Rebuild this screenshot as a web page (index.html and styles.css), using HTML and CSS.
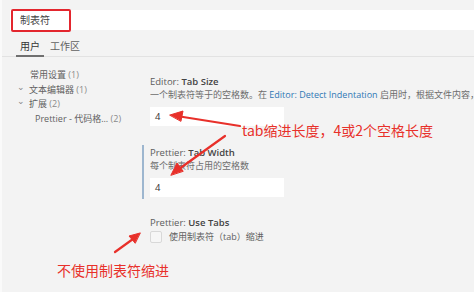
FILE: index.html
```html
<!DOCTYPE html>
<html lang="zh-CN">
<head>
    <meta charset="UTF-8">
    <title>设置 - 制表符</title>
    <link rel="stylesheet" href="styles.css">
</head>
<body>
    <div class="page">
        <div class="search-row">
            <div class="search-box">制表符</div>
            <div class="search-mark"></div>
        </div>

        <div class="tabs">
            <a href="#" class="tab active">用户</a>
            <a href="#" class="tab">工作区</a>
        </div>

        <div class="main">
            <!-- left tree -->
            <div class="tree">
                <div class="tree-item lvl1">常用设置 <span class="count">(1)</span></div>
                <div class="tree-item"><span class="chev">&#8964;</span>文本编辑器 <span class="count">(1)</span></div>
                <div class="tree-item"><span class="chev">&#8964;</span>扩展 <span class="count">(2)</span></div>
                <div class="tree-item lvl2">Prettier - 代码格... <span class="count">(2)</span></div>
            </div>

            <!-- settings list -->
            <div class="settings">
                <div class="setting">
                    <div class="setting-title">Editor: <b>Tab Size</b></div>
                    <div class="setting-desc">一个制表符等于的空格数。在 <a href="#">Editor: Detect Indentation</a> 启用时，根据文件内容，该设</div>
                    <div class="num-input">4</div>
                </div>

                <div class="setting focused">
                    <div class="setting-title">Prettier: <b>Tab Width</b></div>
                    <div class="setting-desc">每个制表符占用的空格数</div>
                    <div class="num-input">4</div>
                </div>

                <div class="setting">
                    <div class="setting-title">Prettier: <b>Use Tabs</b></div>
                    <label class="check-row"><span class="checkbox"></span>使用制表符（tab）缩进</label>
                </div>
            </div>
        </div>

        <!-- annotations -->
        <div class="note note-tab">tab缩进长度，4或2个空格长度</div>
        <div class="note note-use">不使用制表符缩进</div>
        <svg class="arrows" width="474" height="296" viewBox="0 0 474 296">
            <g fill="#e8302a" stroke="#e8302a" stroke-linecap="round">
                <line x1="240" y1="126" x2="180" y2="116.5" stroke-width="2.2"/>
                <polygon points="170,115 183,111 181,121" stroke-width="1"/>
                <line x1="225" y1="136" x2="179" y2="169" stroke-width="2.2"/>
                <polygon points="171,175 177,163 183,171" stroke-width="1"/>
                <line x1="115" y1="252" x2="133" y2="239" stroke-width="2.2"/>
                <polygon points="140,233 129,236 135,243" stroke-width="1"/>
            </g>
        </svg>
    </div>
</body>
</html>
```

FILE: styles.css
```css
* { box-sizing: border-box; }
body { margin: 0; background-color: #ffffff; font-family: "Open Sans", "Noto Sans CJK SC", sans-serif; color: #616161; }

.page { position: relative; width: 474px; height: 292px; overflow: hidden; background-color: #f3f3f3; border-left: 2px solid #fafafa; }

/* Search */
.search-row { position: relative; padding-top: 10px; padding-left: 8px; }
.search-box { height: 20px; background-color: #ffffff; font-size: 10px; line-height: 20px; padding-left: 10px; color: #444; }
.search-mark { position: absolute; left: 9px; top: 9px; width: 60px; height: 23px; border: 2px solid #e3262e; border-radius: 2px; }

/* Tabs */
.tabs { display: flex; margin-top: 7px; padding-left: 14px; border-bottom: 1px solid #e2e2e2; height: 20px; }
.tab { font-size: 10px; color: #616161; text-decoration: none; padding: 0 4px; margin-right: 2px; line-height: 18px; height: 20px; }
.tab.active { color: #333; border-bottom: 2px solid #6f6f6f; width: 28px; }

/* Layout */
.main { display: grid; grid-template-columns: 140px 1fr; }

.tree { padding-top: 11px; font-size: 9px; }
.tree-item { height: 14.5px; line-height: 14.5px; white-space: nowrap; color: #616161; }
.tree-item .count { color: #8a8a8a; }
.tree-item.lvl1 { padding-left: 28px; }
.tree-item.lvl2 { padding-left: 33px; }
.tree-item .chev { display: inline-block; width: 12px; margin-left: 15px; font-size: 9px; color: #888; position: relative; top: -3px; }

.settings { padding-top: 19px; }
.setting { padding: 0 0 0 6px; margin-bottom: 19px; border-left: 2px solid transparent; }
.setting.focused { border-left-color: #9db6cf; padding-top: 2px; padding-bottom: 2px; margin-bottom: 18px; }
.setting-title { font-size: 9.5px; line-height: 12px; color: #5c5c5c; }
.setting-title b { color: #444; font-weight: 600; }
.setting-desc { font-size: 9px; line-height: 13px; color: #6c6c6c; white-space: nowrap; overflow: hidden; }
.setting-desc a { color: #2f78b5; text-decoration: none; }

.num-input { width: 134px; height: 19px; background-color: #ffffff; margin-top: 6px; font-size: 9.5px; line-height: 19px; padding-left: 5px; color: #333; }

.check-row { display: flex; align-items: center; font-size: 9px; color: #616161; margin-top: 1px; }
.checkbox { display: inline-block; width: 12px; height: 12px; border: 1px solid #d8d8d8; background-color: #f6f6f6; border-radius: 2px; margin-right: 7px; }

/* Annotations */
.note { position: absolute; color: #e8302a; font-family: "Noto Sans CJK SC", sans-serif; font-size: 14px; line-height: 18px; white-space: nowrap; }
.note-tab { left: 240px; top: 121px; }
.note-use { left: 55px; top: 261px; }
.arrows { position: absolute; left: -2px; top: 0; }
```
